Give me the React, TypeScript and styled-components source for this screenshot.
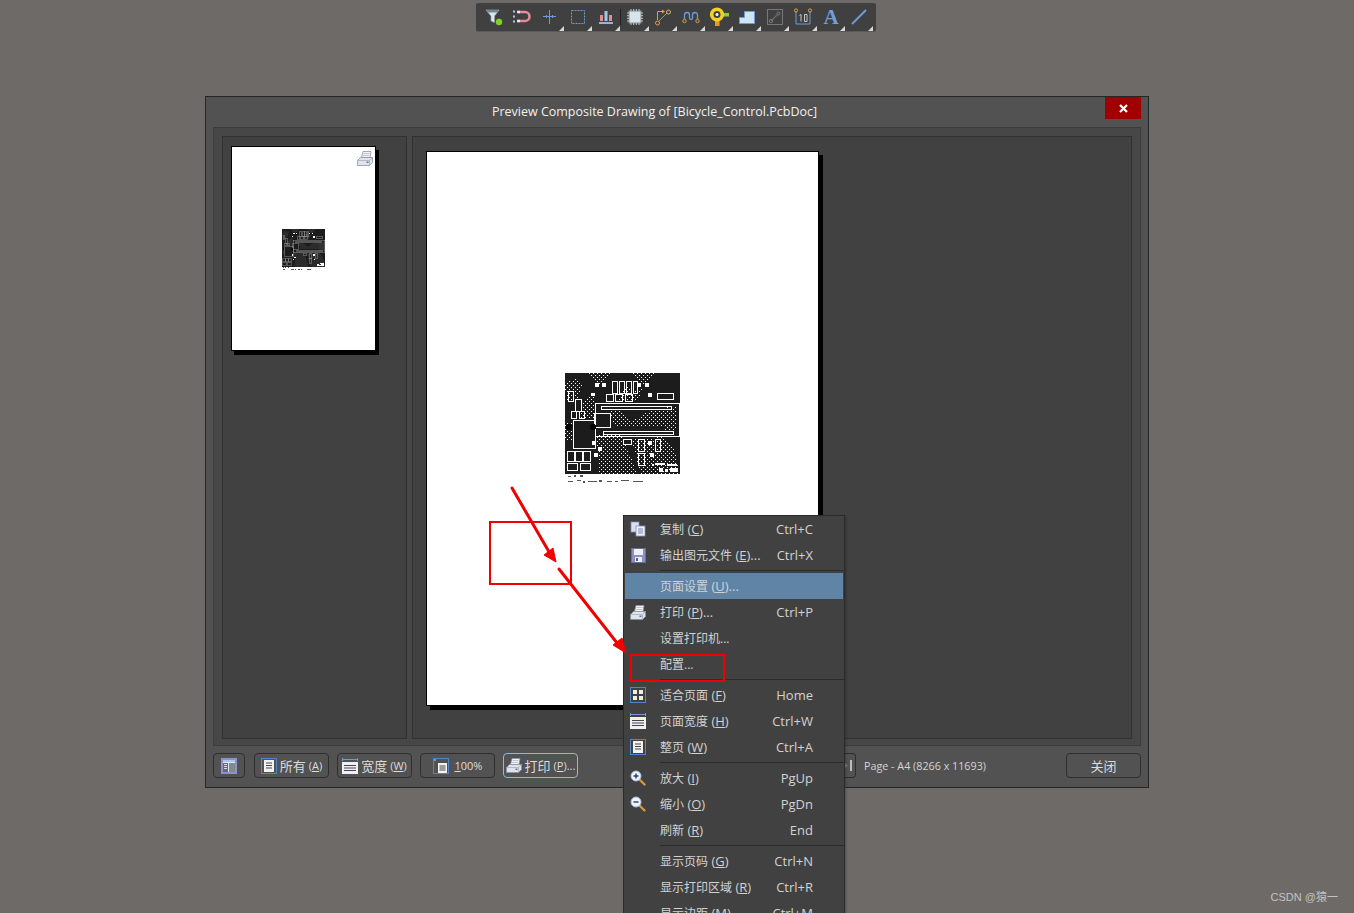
import React from "react";
import styled, { createGlobalStyle } from "styled-components";

const GlobalStyle = createGlobalStyle`
  html, body {
    margin: 0;
    height: 913px;
    overflow: hidden;
    background: #6e6a68;
  }
  body {
    font-family: "Open Sans", "Noto Sans CJK SC", sans-serif;
    font-size: 12px;
    color: #d6d6d6;
  }
  u { text-underline-offset: 1px; }
`;

const Screen = styled.div`
  position: relative;
  height: 913px;
  display: flex;
  flex-direction: column;
  align-items: center;
  padding-top: 3px;
  box-sizing: border-box;
`;

/* top toolbar */
const Toolbar = styled.div`
  display: flex;
  align-items: center;
  width: 400px;
  height: 28px;
  margin-right: 2px;
  padding: 0 3px 0 4px;
  box-sizing: border-box;
  background: #404040;
  border-radius: 2px;
  box-shadow: 0 1px 0 #5b5857;
`;

const Tool = styled.div<{ $menu?: boolean }>`
  position: relative;
  width: 28px;
  height: 28px;
  display: flex;
  align-items: center;
  justify-content: center;
  &::after {
    content: "";
    display: ${({ $menu }) => ($menu ? "block" : "none")};
    position: absolute;
    right: 0;
    bottom: 0;
    border-style: solid;
    border-width: 0 0 5px 5px;
    border-color: transparent transparent #d8d8d8 transparent;
  }
`;

const ToolDivider = styled.div`
  width: 1px;
  height: 16px;
  background: #222;
`;

const LetterTool = styled.span`
  font-family: "Liberation Serif", serif;
  font-weight: 700;
  font-size: 21px;
  line-height: 1;
  color: #6f9fdc;
`;

/* dialog */
const Dialog = styled.div`
  width: 944px;
  height: 692px;
  margin-top: 65px;
  box-sizing: border-box;
  background: #525252;
  border: 1px solid #262626;
  display: flex;
  flex-direction: column;
`;

const TitleBar = styled.div`
  height: 29px;
  flex: none;
  display: flex;
  align-items: flex-start;
  padding-right: 7px;
`;

const Title = styled.div`
  flex: 1;
  text-align: center;
  line-height: 29px;
  font-size: 12.5px;
  padding-right: 2px;
  color: #f0f0f0;
`;

const CloseBox = styled.div`
  width: 36px;
  height: 22px;
  background: #a00000;
  display: flex;
  align-items: center;
  justify-content: center;
`;

const Body = styled.div`
  margin: 1px 7px 0;
  height: 619px;
  flex: none;
  box-sizing: border-box;
  padding: 8px 8px 7px 8px;
  background: #474747;
  border: 1px solid #3c3c3c;
  display: flex;
  gap: 5px;
`;

const PreviewPane = styled.div<{ $wide?: boolean }>`
  box-sizing: border-box;
  height: 603px;
  width: ${({ $wide }) => ($wide ? "720px" : "185px")};
  background: #414141;
  border: 1px solid #313131;
  padding: ${({ $wide }) => ($wide ? "14px 0 0 13px" : "9px 0 0 8px")};
`;

const Sheet = styled.div<{ $wide?: boolean }>`
  position: relative;
  box-sizing: border-box;
  width: ${({ $wide }) => ($wide ? "393px" : "145px")};
  height: ${({ $wide }) => ($wide ? "555px" : "205px")};
  background: #fff;
  border: 1px solid #000;
  box-shadow: ${({ $wide }) => ($wide ? "4px 4px" : "3px 4px")} 0 #000;
  display: flex;
  align-items: center;
  justify-content: center;
`;

const SheetPrinter = styled.div`
  position: absolute;
  top: 4px;
  right: 2px;
`;

const Board = styled.svg`
  margin-top: 2px;
`;

const Footer = styled.div`
  flex: 1;
  display: flex;
  align-items: flex-start;
  padding: 7px 7px 0;
`;

const FooterButton = styled.div<{ $width?: number; $focused?: boolean }>`
  box-sizing: border-box;
  width: ${({ $width }) => $width ?? 75}px;
  height: 25px;
  flex: none;
  margin-right: ${({ $width }) => ($width ? 9 : 8)}px;
  border: 1px solid ${({ $focused }) => ($focused ? "#8fb8e0" : "#2e2e2e")};
  border-radius: 4px;
  display: flex;
  align-items: center;
  justify-content: center;
  gap: 3px;
  color: #dcdcdc;
  font-size: 13px;
  white-space: nowrap;
`;

const Mnemonic = styled.span`
  font-size: 11px;
`;

const NavEnd = styled(FooterButton)`
  margin: 0 8px 0 258px;
  width: 12px;
  border-radius: 0 4px 4px 0;
  border-left: none;
  justify-content: flex-end;
  padding-right: 2px;
`;

const PageInfo = styled.div`
  flex: 1;
  line-height: 27px;
  font-size: 10.75px;
  color: #d4d4d4;
  white-space: nowrap;
`;

const CloseButton = styled(FooterButton)`
  margin: 0;
`;

/* context menu */
const Menu = styled.div`
  position: absolute;
  left: 623px;
  top: 515px;
  width: 222px;
  box-sizing: border-box;
  padding: 0 1px;
  background: #414141;
  border: 1px solid #2b2b2b;
  box-shadow: 1px 1px 2px rgba(0, 0, 0, 0.25);
`;

const MenuRow = styled.div<{ $active?: boolean }>`
  height: 26px;
  display: flex;
  align-items: center;
  padding: 0 30px 0 0;
  background: ${({ $active }) => ($active ? "#5f84a6" : "transparent")};
  color: #d2d2d2;
  font-size: 12px;
  white-space: nowrap;
`;

const MenuIcon = styled.span`
  width: 35px;
  flex: none;
  display: flex;
  justify-content: center;
  padding-right: 9px;
  box-sizing: border-box;
`;

const MenuLabel = styled.span`
  flex: 1;
`;

const MenuLatin = styled.span`
  font-size: 13px;
`;

const MenuDivider = styled.div`
  height: 5px;
  margin-left: 35px;
  margin-right: -1px;
  display: flex;
  align-items: center;
  &::before {
    content: "";
    flex: 1;
    height: 1px;
    background: #2c2c2c;
  }
`;

/* red marks someone drew over the screenshot */
const Annotations = styled.svg`
  position: absolute;
  left: 0;
  top: 0;
  pointer-events: none;
`;

const Watermark = styled.div`
  position: absolute;
  right: 16px;
  bottom: 9px;
  font-family: "Liberation Sans", "Noto Sans CJK SC", sans-serif;
  font-size: 11px;
  color: #c4c2c0;
`;

const FilterIcon = () => (
  <svg width="20" height="20" viewBox="0 0 20 20">
    <path d="M2 3h13l-4.500 6v6.500L7 14V9z" fill="#d9e8f0" stroke="#8fa6b2" strokeWidth=".7" />
    <rect x="3" y="3" width="11" height="2.500" fill="#74898f" />
    <circle cx="15" cy="15" r="3.200" fill="#7ed321" />
  </svg>
);

const MagnetIcon = () => (
  <svg width="20" height="18" viewBox="0 0 20 18">
    <rect x="1" y="2.500" width="2" height="2" fill="#a9c9ea" />
    <rect x="1" y="7.500" width="2" height="2" fill="#a9c9ea" />
    <rect x="1" y="12.500" width="2" height="2" fill="#a9c9ea" />
    <path d="M6 4h7a4.200 4.200 0 0 1 0 9H6" fill="none" stroke="#e58a9a" strokeWidth="2.600" />
    <path d="M5 4h3M5 13h3" stroke="#dfe8ef" strokeWidth="2.600" />
  </svg>
);

const CrossIcon = () => (
  <svg width="16" height="16" viewBox="0 0 16 16">
    <path d="M7.500 1v14M1 7.500h13M4.500 6v3M10.500 6v3" stroke="#6d9bd8" strokeWidth="1" fill="none" />
  </svg>
);

const DashRectIcon = () => (
  <svg width="16" height="16" viewBox="0 0 16 16">
    <rect x="1.500" y="1.500" width="13" height="13" fill="none" stroke="#6d9bd8" strokeWidth="1" strokeDasharray="2 1" />
  </svg>
);

const AlignIcon = () => (
  <svg width="16" height="16" viewBox="0 0 16 16">
    <rect x="2" y="6" width="3" height="6" fill="#e58a9a" />
    <rect x="6.500" y="2" width="3" height="10" fill="#9cc8ec" />
    <rect x="11" y="6" width="3" height="6" fill="#e58a9a" />
    <rect x="1" y="13" width="14" height="2" fill="#8fb8e0" />
  </svg>
);

const ChipIcon = () => (
  <svg width="18" height="18" viewBox="0 0 18 18">
    <rect x="3" y="3" width="12" height="12" fill="#d6e4ec" stroke="#7f8c95" />
    <path d="M5 1v2M7.700 1v2M10.300 1v2M13 1v2M5 15v2M7.700 15v2M10.300 15v2M13 15v2M1 5h2M1 7.700h2M1 10.300h2M1 13h2M15 5h2M15 7.700h2M15 10.300h2M15 13h2" stroke="#c4c4c4" />
  </svg>
);

const RouteIcon = () => (
  <svg width="18" height="18" viewBox="0 0 18 18">
    <path d="M5 13l8-8" fill="none" stroke="#6d9bd8" />
    <path d="M3.500 12V3.500H8" fill="none" stroke="#e0a52a" />
    <path d="M8 1.500l3 2-3 2z" fill="#e0a52a" />
    <circle cx="3.500" cy="15" r="2" fill="none" stroke="#e0a52a" />
    <circle cx="14.500" cy="4" r="2" fill="none" stroke="#d8b070" />
  </svg>
);

const WaveIcon = () => (
  <svg width="18" height="18" viewBox="0 0 18 18">
    <path d="M2.500 11V7a2.500 2.500 0 0 1 5 0v3a1.500 1.500 0 0 0 3 0V7a2.500 2.500 0 0 1 5 0v4" fill="none" stroke="#6d9bd8" strokeWidth="1.300" />
    <circle cx="2.500" cy="13" r="1.700" fill="none" stroke="#d8a040" />
    <circle cx="15.500" cy="13" r="1.700" fill="none" stroke="#d8a040" />
  </svg>
);

const PadIcon = () => (
  <svg width="22" height="20" viewBox="0 0 22 20">
    <rect x="13" y="6" width="8" height="3.500" fill="#8fd03a" />
    <rect x="7" y="12" width="4.500" height="7" fill="#e39a2a" />
    <circle cx="9" cy="7.500" r="5.300" fill="none" stroke="#f2d21f" strokeWidth="3.600" />
    <circle cx="9" cy="7.500" r="1.500" fill="#f5f5f5" />
  </svg>
);

const PolygonIcon = () => (
  <svg width="18" height="18" viewBox="0 0 18 18">
    <path d="M1.500 15.500V9.500h5v-6h10v12z" fill="#cfe6f2" stroke="#6d9bd8" />
  </svg>
);

const WrenchBoxIcon = () => (
  <svg width="18" height="18" viewBox="0 0 18 18">
    <rect x="1.500" y="1.500" width="15" height="15" fill="none" stroke="#777" />
    <path d="M5 13l7-7" stroke="#666" strokeWidth="1.500" />
    <circle cx="5" cy="13" r="1.700" fill="none" stroke="#777" />
    <circle cx="12.500" cy="5.500" r="1.500" fill="none" stroke="#777" />
  </svg>
);

const DimensionIcon = () => (
  <svg width="20" height="18" viewBox="0 0 20 18">
    <path d="M3 3v13h14V3" fill="none" stroke="#6d9bd8" />
    <circle cx="3" cy="2.500" r="1.600" fill="none" stroke="#d8a040" />
    <circle cx="17" cy="2.500" r="1.600" fill="none" stroke="#d8a040" />
    <path d="M6.500 7.500l1.500-1v7M11.500 6.500h2.500v7h-2.500z" fill="none" stroke="#d6d6d6" strokeWidth=".9" />
  </svg>
);

const LineIcon = () => (
  <svg width="18" height="18" viewBox="0 0 18 18">
    <path d="M2 16L16 2" stroke="#6d9bd8" strokeWidth="2" />
  </svg>
);

const PanelToggleIcon = () => (
  <svg width="16" height="16" viewBox="0 0 16 16">
    <rect width="16" height="16" fill="#8f92c8" />
    <rect x="2" y="2" width="12" height="12" fill="#e2e6ee" />
    <rect x="2" y="2" width="12" height="2" fill="#a9c7ea" />
    <rect x="2" y="5" width="5" height="9" fill="#667" />
    <rect x="3" y="6" width="3" height="1" fill="#dde" />
    <rect x="3" y="8" width="3" height="1" fill="#dde" />
    <rect x="3" y="10" width="3" height="1" fill="#dde" />
    <rect x="8" y="5" width="6" height="9" fill="#808890" />
  </svg>
);

const PageIcon = () => (
  <svg width="16" height="16" viewBox="0 0 16 16">
    <rect x=".5" y=".5" width="15" height="15" fill="none" stroke="#4f86c6" />
    <rect x="3" y="2" width="10" height="12" fill="#f2f2f2" />
    <path d="M5 5h6M5 7.500h6M5 10h6" stroke="#444" />
  </svg>
);

const PageWidthIcon = () => (
  <svg width="16" height="16" viewBox="0 0 16 16">
    <path d="M.5 0v3M15.500 0v3M1 1.500h14" stroke="#6d9bd8" />
    <rect y="4" width="16" height="12" fill="#f0f0f0" />
    <path d="M2 7.500h12M2 10h12M2 12.500h12" stroke="#445" />
  </svg>
);

const ActualSizeIcon = () => (
  <svg width="16" height="16" viewBox="0 0 16 16">
    <rect x=".5" y=".5" width="15" height="15" fill="none" stroke="#4f86c6" />
    <rect x="1" y="1" width="2" height="2" fill="#6d9bd8" />
    <rect x="5" y="5" width="9" height="10" fill="#f2f2f2" />
    <path d="M6.500 8h6M6.500 10h6M6.500 12h6" stroke="#444" />
  </svg>
);

const PrinterIcon = () => (
  <svg width="16" height="15" viewBox="0 0 16 15">
    <path d="M6 .5h8l-1 6H4.500z" fill="#f4f4f4" stroke="#8a93a6" strokeWidth=".8" />
    <path d="M6.500 2.500h6M6 4.500h6" stroke="#aab0bd" strokeWidth=".7" />
    <path d="M.5 9.500l3-3h12v5l-3 3H.5z" fill="#dfe3ea" stroke="#8a93a6" strokeWidth=".8" />
    <path d="M.5 9.500h12l3-3M12.500 9.500v5" fill="none" stroke="#a7afbf" strokeWidth=".8" />
    <rect x="9.500" y="10.500" width="2" height="1.500" fill="#6c7486" />
  </svg>
);

const CopyIcon = () => (
  <svg width="16" height="16" viewBox="0 0 16 16">
    <rect x="1" y="1" width="8" height="10" fill="#d9e0f2" stroke="#8790b8" strokeWidth=".8" />
    <rect x="6" y="5" width="9" height="10" fill="#eef1f8" stroke="#8790b8" strokeWidth=".8" />
    <path d="M8 8h5M8 10h5M8 12h5" stroke="#7a84aa" />
  </svg>
);

const SaveIcon = () => (
  <svg width="15" height="15" viewBox="0 0 15 15">
    <rect x=".5" y=".5" width="14" height="14" fill="#8c90c2" stroke="#6a6e9a" />
    <rect x="3" y="1" width="9" height="6" fill="#eef0f6" />
    <rect x="4" y="9" width="7" height="5" fill="#ececf2" />
    <rect x="5" y="10" width="2" height="3" fill="#5a5e88" />
  </svg>
);

const GridIcon = () => (
  <svg width="16" height="16" viewBox="0 0 16 16">
    <rect x=".5" y=".5" width="15" height="15" fill="none" stroke="#4f86c6" />
    <rect x="3" y="3" width="4" height="4" fill="#eee" />
    <rect x="9" y="3" width="4" height="4" fill="#eee" />
    <rect x="3" y="9" width="4" height="4" fill="#eee" />
    <rect x="9" y="9" width="4" height="4" fill="#eee" />
  </svg>
);

const ZoomIcon = ({ plus }: { plus?: boolean }) => (
  <svg width="16" height="16" viewBox="0 0 16 16">
    <path d="M9.500 9.500l5 5" stroke="#d8963c" strokeWidth="2.400" strokeLinecap="round" />
    <circle cx="6" cy="6" r="5" fill="#eef4fb" stroke="#a9bdd4" />
    <path d={plus ? "M3.500 6h5M6 3.500v5" : "M3.500 6h5"} stroke="#1f3f78" strokeWidth="1.400" />
  </svg>
);

const CloseGlyph = () => (
  <svg width="9" height="9" viewBox="0 0 9 9">
    <path d="M1 1l7 7M8 1L1 8" stroke="#fff" strokeWidth="2.200" />
  </svg>
);

const NavGlyph = () => (
  <svg width="8" height="11" viewBox="0 0 8 11">
    <path d="M0 3l3 2.500L0 8z" fill="#777" />
    <rect x="5" y="0" width="2" height="11" fill="#bdbdbd" />
  </svg>
);

// board art, drawn in the 115x101 space of the big preview
const PcbArt = ({ width, height, stroke, dots }: { width: number; height: number; stroke: string; dots: number }) => {
  const id = `dots${width}`;
  return (
    <Board width={width} height={height + 12} viewBox="0 0 115 113" shapeRendering="crispEdges">
      <defs>
        <pattern id={id} width="4" height="4" patternUnits="userSpaceOnUse">
          <rect width="1.300" height="1.300" fill={stroke} />
          <rect x="2" y="2" width="1.300" height="1.300" fill={stroke} />
        </pattern>
      </defs>
      <rect width="115" height="101" fill="#1c1c1c" />
      <g fill={`url(#${id})`} opacity={dots}>
        <polygon points="22,0 48,0 36,12" />
        <polygon points="64,0 92,0 78,14" />
        <polygon points="60,14 78,16 72,28 52,28" />
        <polygon points="0,12 10,4 18,10 12,26 2,30" />
        <polygon points="16,30 30,20 30,46 14,46" />
        <polygon points="100,34 112,34 112,58 100,58" />
        <polygon points="44,38 56,38 68,48 84,38 112,38 112,54 50,54" />
        <polygon points="30,62 56,62 62,74 72,101 34,101 34,80" />
        <polygon points="66,66 100,64 110,78 115,101 76,101" />
        <polygon points="0,50 8,50 8,68 0,68" />
      </g>
      <g fill="none" stroke={stroke} strokeWidth="1">
        <path d="M30 30h84v33H30z" />
        <rect x="36" y="33" width="70" height="3" />
        <rect x="38" y="58" width="70" height="3" />
        <rect x="29" y="40" width="16" height="14" />
        <rect x="10" y="26" width="6" height="12" />
        <rect x="3" y="18" width="5" height="10" />
        <rect x="6" y="38" width="5" height="7" />
        <rect x="14" y="38" width="5" height="7" />
        <path d="M8 47h22v28H8z" />
        <rect x="47" y="8" width="5" height="12" />
        <rect x="54" y="8" width="5" height="12" />
        <rect x="61" y="8" width="5" height="12" />
        <rect x="68" y="8" width="4" height="12" />
        <rect x="41" y="21" width="7" height="7" />
        <rect x="50" y="21" width="7" height="7" />
        <rect x="60" y="21" width="7" height="7" />
        <rect x="92" y="20" width="16" height="6" />
        <rect x="73" y="66" width="6" height="12" />
        <rect x="73" y="80" width="6" height="12" />
        <rect x="90" y="66" width="5" height="12" />
        <rect x="58" y="66" width="8" height="5" />
        <rect x="2" y="78" width="7" height="10" />
        <rect x="10" y="78" width="7" height="10" />
        <rect x="18" y="78" width="7" height="10" />
        <rect x="2" y="90" width="10" height="7" />
        <rect x="15" y="90" width="10" height="7" />
      </g>
      <g fill="#000">
        <rect x="11" y="48" width="16" height="22" fill="#1c1c1c" />
        <circle cx="4" cy="54" r="3" />
        <circle cx="28" cy="54" r="3" />
      </g>
      <g fill="#fff">
        <rect x="30" y="10" width="4" height="4" />
        <rect x="37" y="10" width="4" height="4" />
        <rect x="72" y="10" width="4" height="4" />
        <rect x="80" y="10" width="4" height="4" />
        <rect x="26" y="20" width="4" height="3" />
        <rect x="83" y="20" width="4" height="4" />
        <rect x="27" y="68" width="3" height="4" />
        <rect x="33" y="74" width="4" height="4" />
        <rect x="29" y="80" width="4" height="4" />
        <rect x="83" y="68" width="4" height="4" />
        <rect x="85" y="80" width="4" height="4" />
        <rect x="87" y="91" width="2" height="2" />
        <rect x="90" y="90" width="10" height="2" />
        <rect x="102" y="91" width="10" height="2" />
        <rect x="94" y="95" width="4" height="4" />
        <rect x="100" y="96" width="3" height="3" />
        <rect x="105" y="95" width="8" height="4" />
      </g>
      <g fill="#555">
        <rect x="3" y="103" width="3" height="1" />
        <rect x="9" y="102" width="2" height="2" />
        <rect x="15" y="102" width="3" height="2" />
        <rect x="3" y="108" width="5" height="1" />
        <rect x="12" y="107" width="4" height="1" />
        <rect x="18" y="108" width="2" height="2" />
        <rect x="23" y="108" width="9" height="1" />
        <rect x="34" y="107" width="3" height="2" />
        <rect x="42" y="108" width="5" height="1" />
        <rect x="50" y="108" width="3" height="1" />
        <rect x="56" y="107" width="8" height="1" />
        <rect x="68" y="108" width="10" height="1" />
      </g>
    </Board>
  );
};

type Entry = { label?: string; key?: string; shortcut?: string; icon?: React.ReactNode; active?: boolean; tail?: string };

const menuEntries: Entry[] = [
  { label: "复制", key: "C", shortcut: "Ctrl+C", icon: <CopyIcon /> },
  { label: "输出图元文件", key: "E", tail: "...", shortcut: "Ctrl+X", icon: <SaveIcon /> },
  {},
  { label: "页面设置", key: "U", tail: "...", active: true },
  { label: "打印", key: "P", tail: "...", shortcut: "Ctrl+P", icon: <PrinterIcon /> },
  { label: "设置打印机..." },
  { label: "配置..." },
  {},
  { label: "适合页面", key: "F", shortcut: "Home", icon: <GridIcon /> },
  { label: "页面宽度", key: "H", shortcut: "Ctrl+W", icon: <PageWidthIcon /> },
  { label: "整页", key: "W", shortcut: "Ctrl+A", icon: <PageIcon /> },
  {},
  { label: "放大", key: "I", shortcut: "PgUp", icon: <ZoomIcon plus /> },
  { label: "缩小", key: "O", shortcut: "PgDn", icon: <ZoomIcon /> },
  { label: "刷新", key: "R", shortcut: "End" },
  {},
  { label: "显示页码", key: "G", shortcut: "Ctrl+N" },
  { label: "显示打印区域", key: "R", shortcut: "Ctrl+R" },
  { label: "显示边距", key: "M", shortcut: "Ctrl+M" },
];

const App = () => (
  <Screen>
    <GlobalStyle />
    <Toolbar>
      <Tool><FilterIcon /></Tool>
      <Tool><MagnetIcon /></Tool>
      <Tool $menu><CrossIcon /></Tool>
      <Tool $menu><DashRectIcon /></Tool>
      <Tool $menu><AlignIcon /></Tool>
      <ToolDivider />
      <Tool $menu><ChipIcon /></Tool>
      <Tool $menu><RouteIcon /></Tool>
      <Tool $menu><WaveIcon /></Tool>
      <Tool $menu><PadIcon /></Tool>
      <Tool $menu><PolygonIcon /></Tool>
      <Tool $menu><WrenchBoxIcon /></Tool>
      <Tool $menu><DimensionIcon /></Tool>
      <Tool $menu><LetterTool>A</LetterTool></Tool>
      <Tool $menu><LineIcon /></Tool>
    </Toolbar>

    <Dialog>
      <TitleBar>
        <Title>Preview Composite Drawing of [Bicycle_Control.PcbDoc]</Title>
        <CloseBox><CloseGlyph /></CloseBox>
      </TitleBar>
      <Body>
        <PreviewPane>
          <Sheet>
            <SheetPrinter><PrinterIcon /></SheetPrinter>
            <PcbArt width={43} height={38} stroke="#b8b8b8" dots={0.2} />
          </Sheet>
        </PreviewPane>
        <PreviewPane $wide>
          <Sheet $wide>
            <PcbArt width={115} height={101} stroke="#ffffff" dots={1} />
          </Sheet>
        </PreviewPane>
      </Body>
      <Footer>
        <FooterButton $width={32}><PanelToggleIcon /></FooterButton>
        <FooterButton><PageIcon />所有 <Mnemonic>(<u>A</u>)</Mnemonic></FooterButton>
        <FooterButton><PageWidthIcon />宽度 <Mnemonic>(<u>W</u>)</Mnemonic></FooterButton>
        <FooterButton><ActualSizeIcon /><Mnemonic>&nbsp;<u>1</u>00%</Mnemonic></FooterButton>
        <FooterButton $focused><PrinterIcon />打印 <Mnemonic>(<u>P</u>)...</Mnemonic></FooterButton>
        <NavEnd><NavGlyph /></NavEnd>
        <PageInfo>Page - A4 (8266 x 11693)</PageInfo>
        <CloseButton>关闭</CloseButton>
      </Footer>
    </Dialog>

    <Menu>
      {menuEntries.map((entry, i) =>
        entry.label ? (
          <MenuRow key={i} $active={entry.active}>
            <MenuIcon>{entry.icon}</MenuIcon>
            <MenuLabel>
              {entry.label}
              {entry.key && (
                <MenuLatin> (<u>{entry.key}</u>){entry.tail}</MenuLatin>
              )}
            </MenuLabel>
            <MenuLatin>{entry.shortcut}</MenuLatin>
          </MenuRow>
        ) : (
          <MenuDivider key={i} />
        )
      )}
    </Menu>

    <Annotations width="1354" height="913" viewBox="0 0 1354 913">
      <rect x="490" y="522" width="81" height="62" fill="none" stroke="#f00000" strokeWidth="2" />
      <rect x="631" y="655" width="93" height="26" fill="none" stroke="#f00000" strokeWidth="2" />
      <path d="M512 488L552 557" stroke="#f00000" strokeWidth="3" strokeLinecap="round" />
      <path d="M556 562L544 555L553 548z" fill="#f00000" stroke="#f00000" />
      <path d="M559 569L621 648" stroke="#f00000" strokeWidth="3" strokeLinecap="round" />
      <path d="M626 653L613 645L622 638z" fill="#f00000" stroke="#f00000" />
    </Annotations>

    <Watermark>CSDN @猿一</Watermark>
  </Screen>
);

export default App;
